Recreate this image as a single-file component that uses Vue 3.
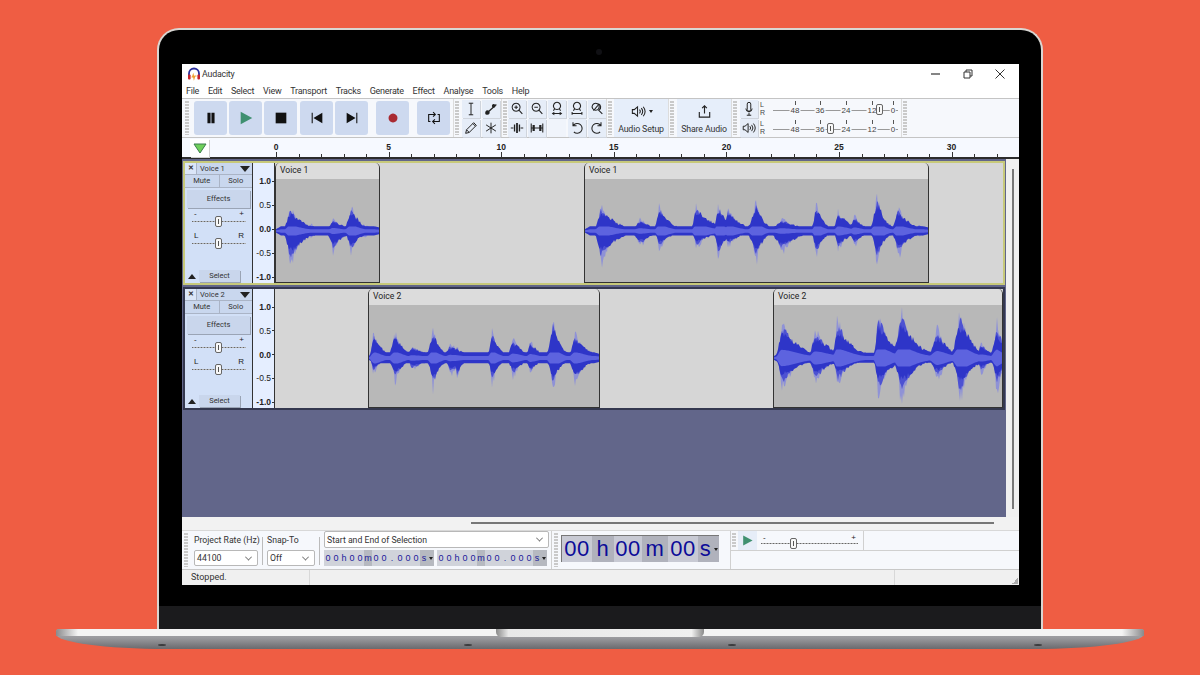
<template>
  <div class="page">
    <div class="lid">
      <div class="camera" />
      <div class="app">
        <div class="titlebar">
          <svg class="logo" viewBox="0 0 14 14">
            <path d="M2 9V6.5a5 5 0 0 1 10 0V9" fill="none" stroke="#2a2f9c" stroke-width="1.8" />
            <rect x="1" y="7.5" width="2.6" height="5" rx="1" fill="#c8222a" />
            <rect x="10.4" y="7.5" width="2.6" height="5" rx="1" fill="#c8222a" />
            <path d="M4.5 10h1l.7-2 .8 3.5.8-2.5h1.7" fill="none" stroke="#f0a030" stroke-width="1.2" />
          </svg>
          <span class="title">Audacity</span>
          <div class="winctl">
            <svg viewBox="0 0 12 12"><path d="M1 6h9" stroke="#333" stroke-width="1.2" /></svg>
            <svg viewBox="0 0 12 12"><path d="M2 4h6v6H2zM4 4V2h6v6H8" fill="none" stroke="#333" stroke-width="1" /></svg>
            <svg viewBox="0 0 12 12"><path d="M1.5 1.5l9 9M10.5 1.5l-9 9" stroke="#333" stroke-width="1" /></svg>
          </div>
        </div>
        <div class="menubar">
          <span v-for="m in menus" :key="m">{{ m }}</span>
        </div>

        <div class="toolbars">
          <div class="grip" />
          <div class="transport">
            <button v-for="b in transport" :key="b.name" class="tbtn" :class="b.cls">
              <svg viewBox="0 0 18 18"><path :d="b.d" :fill="b.fill || 'none'" :stroke="b.stroke || 'none'" :stroke-width="b.sw || 0" /></svg>
            </button>
          </div>
          <div class="sep" /><div class="grip" />
          <div class="tools">
            <button v-for="b in tools" :key="b.name" class="sbtn">
              <svg viewBox="0 0 18 18"><path v-if="b.f" :d="b.f" fill="#222" /><path v-if="b.s" :d="b.s" fill="none" stroke="#222" :stroke-width="b.sw || 1.1" /></svg>
            </button>
          </div>
          <div class="sep" /><div class="grip" />
          <div class="edits">
            <component :is="b.gap ? 'div' : 'button'" v-for="(b, i) in edits" :key="i" :class="b.gap ? 'gapcell' : 'sbtn'">
              <svg v-if="!b.gap" viewBox="0 0 18 18"><path v-if="b.f" :d="b.f" fill="#222" /><path v-if="b.s" :d="b.s" fill="none" stroke="#222" stroke-width="1.2" /></svg>
            </component>
          </div>
          <div class="sep" /><div class="grip" />
          <div class="bigbtn setup">
            <div class="bigicon">
              <svg viewBox="0 0 18 18"><path :d="speaker" fill="none" stroke="#222" stroke-width="1.1" /></svg>
              <i class="caret" />
            </div>
            <span>Audio Setup</span>
          </div>
          <div class="sep" /><div class="grip" />
          <div class="bigbtn share">
            <div class="bigicon">
              <svg viewBox="0 0 18 18"><path d="M9 11V3M6.500 5.500 9 3l2.500 2.500M3.500 9.500v5.500h11V9.500" fill="none" stroke="#222" stroke-width="1.2" /></svg>
            </div>
            <span>Share Audio</span>
          </div>
          <div class="sep" /><div class="grip" />
          <div class="meters">
            <div v-for="m in meters" :key="m.name" class="meter">
              <button class="sbtn">
                <svg viewBox="0 0 18 18"><path :d="m.icon" fill="none" stroke="#222" stroke-width="1.1" /></svg>
              </button>
              <div class="lr"><span>L</span><span>R</span></div>
              <div class="meterscale">
                <i v-for="t in meterTicks" :key="t.label" class="mtick" :style="{ left: t.x + 'px' }" />
                <span v-for="t in meterTicks" :key="t.label" class="mlabel" :style="{ left: t.x + 'px' }">{{ t.label }}</span>
                <b class="thumb" :style="{ left: m.thumb + 'px' }" />
              </div>
            </div>
          </div>
          <div class="sep" /><div class="grip" />
        </div>

        <div class="ruler">
          <div class="playhead">
            <svg viewBox="0 0 14 11"><path d="M1 1h12L7 10z" fill="#6fd05a" stroke="#3c7d4c" stroke-width="1" /></svg>
          </div>
          <svg class="rulerticks" width="837" height="21">
            <line v-for="t in rulerTicks" :key="t.x" :x1="t.x" :x2="t.x" :y1="t.major ? 15 : 17" y2="21" stroke="#333" stroke-width="1" />
          </svg>
          <span v-for="n in rulerLabels" :key="n.t" class="rlabel" :style="{ left: n.x + 'px' }">{{ n.t }}</span>
        </div>

        <div class="workspace">
          <div class="tracks">
            <div v-for="t in tracks" :key="t.name" class="track" :class="{ selected: t.selected }" :style="{ height: t.h + 'px' }">
              <div class="panel">
                <div class="phead">
                  <i class="close">✕</i>
                  <span class="pname">{{ t.name }}</span>
                  <i class="caret big" />
                </div>
                <div class="pmute"><span>Mute</span><span>Solo</span></div>
                <div class="peffects">Effects</div>
                <div class="pslider">
                  <div class="sliderlabels"><span>-</span><span>+</span></div>
                  <div class="sliderline"><b class="thumb" /></div>
                </div>
                <div class="pslider pan">
                  <div class="sliderlabels"><span>L</span><span>R</span></div>
                  <div class="sliderline"><b class="thumb" /></div>
                </div>
                <div class="pfoot">
                  <i class="caret up" />
                  <span class="pselect">Select</span>
                </div>
              </div>
              <div class="vruler">
                <span v-for="v in vscale" :key="v.t" :class="{ bold: v.bold }">{{ v.t }}</span>
              </div>
              <div class="lane">
                <div v-for="c in t.clips" :key="c.gap" class="clip" :style="{ marginLeft: c.gap + 'px', width: c.w + 'px' }">
                  <div class="cliptitle">{{ t.name }}</div>
                  <svg class="wave" :width="c.w" height="106">
                    <path :d="c.outer" fill="#8f92d6" />
                    <path :d="c.peak" fill="#4d52d2" />
                    <path :d="c.mid" fill="#2e35c8" />
                    <path :d="c.rms" fill="#5d63df" />
                  </svg>
                </div>
              </div>
            </div>
          </div>
          <div class="vscroll"><i /></div>
        </div>

        <div class="hscroll"><i /></div>

        <div class="bottombars">
          <div class="grip" />
          <div class="selbar">
            <div class="field rate">
              <label>Project Rate (Hz)</label>
              <div class="combo"><span>44100</span><i class="chev" /></div>
            </div>
            <div class="vbar" />
            <div class="field snap">
              <label>Snap-To</label>
              <div class="combo"><span>Off</span><i class="chev" /></div>
            </div>
            <div class="vbar" />
            <div class="field range">
              <div class="combo wide"><span>Start and End of Selection</span><i class="chev" /></div>
              <div class="times">
                <div v-for="n in 2" :key="n" class="timebox">
                  <span v-for="(ch, i) in smallTime" :key="i" :class="/[ms]/.test(ch) ? 'unit' : 'num'">{{ ch }}</span>
                  <i class="caret" />
                </div>
              </div>
            </div>
          </div>
          <div class="vline sel" />
          <div class="grip tgrip" />
          <div class="bigtime">
            <span v-for="(c, i) in bigTime" :key="i" :class="c.unit ? 'unit' : 'num'" :style="{ width: c.w + 'px' }">{{ c.t }}</span>
            <i class="caret" />
          </div>
          <div class="vline big" />
          <div class="speed">
            <div class="speedrow">
              <div class="grip" />
              <button class="playat">
                <svg viewBox="0 0 18 18"><path d="M3 2l13 7-13 7z" fill="#3f9070" /></svg>
              </button>
              <div class="speedslider">
                <div class="sliderlabels"><span>-</span><span>+</span></div>
                <div class="sliderline"><b class="thumb" /></div>
              </div>
              <div class="vline end" />
            </div>
          </div>
        </div>

        <div class="status">
          <span class="stopped">Stopped.</span>
          <span class="s2" />
          <span class="s3"><i class="resize" /></span>
        </div>
      </div>
      <div class="chin" />
    </div>
    <div class="base">
      <div class="notch" />
      <i class="foot f1" /><i class="foot f2" /><i class="foot f3" /><i class="foot f4" />
    </div>
  </div>
</template>

<script setup>
const menus = ['File', 'Edit', 'Select', 'View', 'Transport', 'Tracks', 'Generate', 'Effect', 'Analyse', 'Tools', 'Help']

const transport = [
  { name: 'pause', d: 'M5 3h3.500v12H5zM9.500 3H13v12H9.500z', fill: '#111' },
  { name: 'play', d: 'M3 2l13 7-13 7z', fill: '#3f9070' },
  { name: 'stop', d: 'M3 3h12v12H3z', fill: '#111' },
  { name: 'prev', cls: 'step', d: 'M3 3h1.200v12H3zM15 3v12L5 9z', fill: '#111' },
  { name: 'next', d: 'M15 3h-1.200v12H15zM3 3v12l10-6z', fill: '#111' },
  { name: 'rec', cls: 'gapl', d: 'M9 4a5 5 0 1 0 .01 0z', fill: '#a92a32' },
  { name: 'loop', cls: 'gapl', d: 'M5 13H3V5h7M8 2.500 10.500 5 8 7.500M13 5h2v8H8M10 15.500 7.500 13l2.500-2.500', stroke: '#111', sw: 1.2 },
]

const tools = [
  { name: 'ibeam', s: 'M6.500 2.500h5M6.500 15.500h5M9 2.500v13' },
  { name: 'env', f: 'M12 3.500a2 2 0 1 0 .01 0zM5 10.500a2.500 2.500 0 1 0 .01 0z', s: 'M3 15 15 4', sw: 1.4 },
  { name: 'draw', s: 'M3 15l1-4 8-8 3 3-8 8zM4 11l3 3M11 4l3 3' },
  { name: 'multi', s: 'M9 3v12M3.500 5.500l11 7M14.500 5.500l-11 7' },
]

const lens = 'M8 2.500a4.500 4.500 0 1 0 .01 0zM11.200 10.300 15 14.500'
const lensSmall = 'M9 1.500a4 4 0 1 0 .01 0zM6.500 8.500 5 11M11.500 8.500 13 11'
const edits = [
  { s: lens + 'M6 7h4M8 5v4' },
  { s: lens + 'M6 7h4' },
  { s: lensSmall + 'M5 14h8', f: 'M3 14l3-2v4zM15 14l-3-2v4z' },
  { s: lensSmall + 'M3.500 12.500v3M14.500 12.500v3M3.500 14h11' },
  { s: 'M7.500 2.500a4 4 0 1 0 .01 0zM10.500 3a4 4 0 0 1 1 7M10.500 10l4.500 4.500M5 11l5-6' },
  { s: 'M2 9h3M13 9h3', f: 'M5.500 5h1.500v8H5.500zM8 3.500h2v11H8zM11 5h1.500v8H11z' },
  { s: 'M2.500 4v10M15.500 4v10M2.500 9h13', f: 'M4 5.500h2.500v7H4zM11.500 5.500H14v7h-2.500z' },
  { gap: true },
  { s: 'M5 6a5.500 5.500 0 1 1 .5 7.500M4.500 2.500V6.500h4' },
  { s: 'M13 6a5.500 5.500 0 1 0-.5 7.500M13.500 2.500V6.500h-4' },
]

const speaker = 'M2.500 7v4h2l3.500 3V4L4.500 7zM10 7a3 3 0 0 1 0 4M12 5.500a5.500 5.500 0 0 1 0 7M14 4a8 8 0 0 1 0 10'
const mic = 'M7 3.500a2 2 0 0 1 4 0v6a2 2 0 0 1-4 0zM5.500 8.500a3.500 3.500 0 0 0 7 0M9 13v3M6.500 16h5'
const meters = [
  { name: 'rec', icon: mic, thumb: 103 },
  { name: 'play', icon: speaker, thumb: 54 },
]
const meterTicks = [
  { label: '48', x: 22 },
  { label: '36', x: 47 },
  { label: '24', x: 73 },
  { label: '12', x: 99 },
  { label: '0', x: 120 },
]

// time axis of the ruler: second zero sits 94px into the window, 22.5px per second
const zeroX = 94
const pxPerSec = 22.52
const rulerTicks = Array.from({ length: 33 }, (_, i) => ({
  x: Math.round(zeroX + i * pxPerSec) + 0.5,
  major: i % 5 === 0,
}))
const rulerLabels = [0, 5, 10, 15, 20, 25, 30].map((t) => ({ t, x: zeroX + t * pxPerSec }))

const vscale = [
  { t: '1.0', bold: true },
  { t: '0.5' },
  { t: '0.0', bold: true },
  { t: '-0.5' },
  { t: '-1.0', bold: true },
]

const smallTime = '00h00m00.000s'.split('')
const bigTime = [
  { t: '00', w: 30 },
  { t: 'h', w: 22, unit: true },
  { t: '00', w: 28 },
  { t: 'm', w: 26, unit: true },
  { t: '00', w: 30 },
  { t: 's', w: 15, unit: true },
]

// little repeatable noise so each clip keeps the same jagged edge between runs
function noise(i, seed) {
  const v = Math.sin(i * 12.9898 + seed * 78.233) * 43758.5453
  return v - Math.floor(v)
}

// syllable shape: soft attack, rounded top, then a long tail
function bump(x, p, stretch) {
  const d = x - p[0]
  const rise = (p[3] || 4) * stretch
  const fall = (p[4] || 12) * stretch
  if (d < 0) return Math.exp(-(d * d) / (rise * rise))
  return 0.62 * Math.exp(-(d * d) / (fall * fall * 1.1)) + 0.38 * Math.exp(-d / (fall * 2.6))
}

function layer(w, cy, top, bottom) {
  let up = `M0 ${cy}`
  let down = ''
  for (let x = 0; x <= w; x++) {
    up += `L${x} ${(cy - top(x)).toFixed(1)}`
    down = `L${x} ${(cy + bottom(x)).toFixed(1)}` + down
  }
  return up + down + 'Z'
}

function makeClip(spec) {
  const { w, cy, peaks, seed, floor, body, rmsMax } = spec
  const taper = (x) => Math.min(1, (x + 2) / 8, (w - x + 14) / 20)
  const env = (x, idx, stretch) => {
    let v = floor
    for (const p of peaks) v = Math.max(v, bump(x, p, stretch) * p[idx])
    return v
  }
  const jag = (x, off, lo) => lo + (1 - lo) * noise(x + off, seed)
  const outerTop = (x) => env(x, 1, 0.7) * jag(x, 0, 0.62) * taper(x)
  const outerBot = (x) => env(x, 2, 0.7) * jag(x, 200, 0.62) * taper(x)
  const peakTop = (x) => env(x, 1, 0.95) * 0.8 * jag(x, 300, 0.72) * taper(x)
  const peakBot = (x) => env(x, 2, 0.95) * 0.7 * jag(x, 500, 0.72) * taper(x)
  const midTop = (x) => Math.max(floor * 2.2, env(x, 1, 1.5) * body * jag(x, 400, 0.74)) * taper(x)
  const midBot = (x) => Math.max(floor * 2, env(x, 2, 1.5) * body * 0.78 * jag(x, 600, 0.74)) * taper(x)
  const rms = (x) => Math.max(floor * 0.8, Math.min(rmsMax, env(x, 1, 1.6) * 0.2)) * taper(x)
  return {
    outer: layer(w, cy, outerTop, outerBot),
    peak: layer(w, cy, peakTop, peakBot),
    mid: layer(w, cy, midTop, midBot),
    rms: layer(w, cy, rms, rms),
  }
}

const tracks = [
  {
    name: 'Voice 1',
    selected: true,
    h: 124,
    clips: [
      {
        gap: 0, w: 105, cy: 52, seed: 1, floor: 2.2, body: 0.7, rmsMax: 4.5,
        peaks: [[15, 26, 40, 3, 9], [36, 8, 8, 3, 6], [58, 15, 25, 3, 7], [76, 28, 27, 3, 6], [88, 8, 8, 3, 9]],
      },
      {
        gap: 204, w: 345, cy: 52, seed: 2, floor: 2.2, body: 0.7, rmsMax: 4.5,
        peaks: [
          [17, 28, 38, 3, 10], [56, 14, 19, 4, 8], [75, 29, 23, 2, 7], [112, 30, 20, 2, 10], [134, 31, 31, 2, 6],
          [144, 26, 20, 2, 8], [172, 34, 38, 4, 5], [198, 14, 26, 6, 11], [232, 31, 33, 2, 5], [254, 23, 23, 2, 8],
          [270, 18, 20, 2, 6], [293, 41, 38, 3, 5], [314, 26, 31, 3, 8], [335, 7, 7, 3, 8],
        ],
      },
    ],
  },
  {
    name: 'Voice 2',
    h: 123,
    clips: [
      {
        gap: 93, w: 232, cy: 53, seed: 3, floor: 2.6, body: 0.7, rmsMax: 5.5,
        peaks: [[5, 30, 19, 2, 6], [27, 30, 28, 3, 6], [44, 14, 15, 3, 11], [65, 33, 37, 3, 5], [82, 16, 20, 3, 11], [89, 14, 30, 1, 3], [124, 31, 32, 2, 5], [145, 22, 23, 3, 7], [162, 20, 20, 2, 6], [185, 44, 37, 3, 5], [207, 28, 30, 3, 8]],
      },
      {
        gap: 173, w: 230, cy: 53, seed: 4, floor: 2.4, body: 0.62, rmsMax: 8.5,
        peaks: [
          [9, 41, 37, 3, 12], [42, 33, 30, 3, 11], [64, 45, 33, 2, 10], [105, 53, 45, 2, 9],
          [128, 55, 50, 4, 10], [164, 35, 28, 4, 8], [187, 55, 50, 4, 8], [208, 18, 18, 3, 7], [224, 42, 40, 3, 8],
        ],
      },
    ],
  },
]

for (const t of tracks) {
  t.clips = t.clips.map((c) => ({ ...c, ...makeClip(c) }))
}
</script>

<style>
html, body { margin: 0; background: #ef5d43; }
</style>

<style scoped>
.page {
  width: 1200px;
  height: 675px;
  overflow: hidden;
  display: flex;
  flex-direction: column;
  align-items: center;
  padding-top: 28px;
  box-sizing: border-box;
  background: #ef5d43;
  font-family: Roboto, "Open Sans", sans-serif;
  color: #222;
}

.lid {
  position: relative;
  width: 886px;
  height: 601px;
  flex-shrink: 0;
  box-sizing: border-box;
  padding: 34px 0 0 23px;
  background: #000;
  border: 2px solid #d9d6d2;
  border-bottom: 0;
  border-radius: 22px 22px 0 0;
  display: flex;
  flex-direction: column;
}

.camera {
  position: absolute;
  top: 19px;
  left: 437px;
  width: 6px;
  height: 6px;
  border-radius: 50%;
  background: #101014;
}

.app {
  width: 837px;
  height: 521px;
  background: #f2f2f2;
  display: flex;
  flex-direction: column;
  flex-shrink: 0;
}

.chin {
  margin: 21px 0 0 -23px;
  width: 882px;
  flex: 1;
  background: #1b1b1d;
}

.titlebar {
  height: 19px;
  padding-bottom: 1px;
  flex-shrink: 0;
  background: #fff;
  display: flex;
  align-items: center;
  padding-left: 5px;
  gap: 1px;
}

.logo { width: 14px; height: 14px; }
.title { font-size: 8.8px; letter-spacing: -0.2px; color: #333; }

.winctl {
  margin-left: auto;
  display: flex;
  gap: 20px;
  padding-right: 13px;
}
.winctl svg { width: 12px; height: 12px; }

.menubar {
  height: 14px;
  flex-shrink: 0;
  background: #fff;
  display: flex;
  align-items: center;
  gap: 8.8px;
  padding-left: 4px;
  font-size: 9px;
  letter-spacing: -0.25px;
  color: #333;
  white-space: nowrap;
}

.toolbars {
  height: 40px;
  flex-shrink: 0;
  box-sizing: border-box;
  background: #f6f8fc;
  border-top: 1px solid #c4c4c4;
  border-bottom: 1px solid #c4c4c4;
  display: flex;
  align-items: stretch;
  padding-left: 2px;
}

.grip {
  width: 4px;
  margin: 2px 0 2px 1px;
  flex-shrink: 0;
  background-image: radial-gradient(circle at 1px 1px, #c8c8c8 0.7px, transparent 1px);
  background-size: 2px 3px;
}

.sep {
  width: 1px;
  background: #dcdcdc;
  flex-shrink: 0;
}

button {
  padding: 0;
  border: 0;
  font: inherit;
  display: flex;
  align-items: center;
  justify-content: center;
}

.transport {
  display: flex;
  align-items: center;
  gap: 2px;
  padding: 0 3px 0 5px;
}

.tbtn {
  width: 33px;
  height: 34px;
  background: #cdd9ef;
  border-radius: 3px;
}
.tbtn svg { width: 16px; height: 16px; }
.tbtn.gapl { margin-left: 6px; }
.tbtn.step { margin-left: 1px; }

.tools, .edits {
  display: grid;
  gap: 1px 2px;
  align-content: center;
}
.tools { grid-template-columns: repeat(2, 18px); grid-auto-rows: 18px; margin: 0 1px 0 3px; }
.edits { grid-template-columns: repeat(5, 18px); grid-auto-rows: 18px; margin-left: 1px; }

.sbtn {
  width: 18px;
  height: 18px;
  background: #e6edf8;
  box-shadow: 1px 1px 0 #cfd4dc;
}
.sbtn svg { width: 16px; height: 16px; }
.gapcell { width: 18px; height: 18px; background: #f0f4fb; }

.bigbtn {
  background: #e6eefa;
  display: flex;
  flex-direction: column;
  align-items: center;
  justify-content: space-between;
  padding: 2px 0 3px;
  font-size: 8.8px;
  letter-spacing: -0.15px;
  color: #333;
  white-space: nowrap;
  flex-shrink: 0;
}
.setup { width: 54px; margin-left: 2px; }
.share { width: 54px; margin-left: 3px; }

.bigicon {
  display: flex;
  align-items: center;
  height: 20px;
  gap: 2px;
}
.bigicon svg { width: 17px; height: 17px; }

.caret {
  display: inline-block;
  width: 0;
  height: 0;
  border-left: 2.5px solid transparent;
  border-right: 2.5px solid transparent;
  border-top: 3px solid #222;
}
.caret.big { border-left-width: 5px; border-right-width: 5px; border-top-width: 6px; margin: 0 2px 0 auto; }
.caret.up { border-top: 0; border-left-width: 4px; border-right-width: 4px; border-bottom: 5px solid #222; margin-left: 3px; }

.meters {
  width: 161px;
  margin-left: 3px;
  display: flex;
  flex-direction: column;
  justify-content: center;
  gap: 1px;
}
.meter {
  display: flex;
  align-items: center;
  height: 18px;
}
.lr {
  width: 13px;
  margin-left: 2px;
  font-size: 7px;
  line-height: 8px;
  display: flex;
  flex-direction: column;
  color: #444;
  font-family: "Liberation Sans", sans-serif;
}

.meterscale {
  position: relative;
  width: 125px;
  height: 18px;
  background: linear-gradient(#999, #999) 0 10px / 100% 1px no-repeat;
}
.mtick {
  position: absolute;
  top: 1px;
  width: 1px;
  height: 4px;
  background: #555;
}
.mlabel {
  position: absolute;
  top: 6px;
  transform: translateX(-50%);
  padding: 0 1px;
  background: #f6f8fc;
  font-size: 8px;
  line-height: 9px;
  color: #444;
  font-family: "Liberation Sans", sans-serif;
}
.thumb {
  position: absolute;
  top: -5px;
  width: 7px;
  height: 11px;
  box-sizing: border-box;
  background: #f8f8f8 linear-gradient(#555, #555) center / 1px 5px no-repeat;
  border: 1px solid #666;
  border-radius: 2px;
}
.meterscale .thumb { top: 4px; }

.ruler {
  position: relative;
  height: 21px;
  flex-shrink: 0;
  box-sizing: border-box;
  background: #f6f9ff;
  border-bottom: 2px solid #2c2c2c;
}
.rulerticks { position: absolute; left: 0; top: -1px; }
.playhead {
  position: absolute;
  left: 8px;
  top: 1px;
  width: 19px;
  height: 18px;
  background: #fff;
  box-shadow: 1px 1px 0 #d0d0d0;
  display: flex;
  align-items: center;
  justify-content: center;
}
.playhead svg { width: 14px; height: 11px; }
.rlabel {
  position: absolute;
  top: 4px;
  transform: translateX(-50%);
  font: bold 8.5px "Liberation Sans", sans-serif;
  color: #222;
}

.workspace {
  flex: 1;
  min-height: 0;
  display: flex;
  background: #62668a;
}
.tracks {
  flex: 1;
  display: flex;
  flex-direction: column;
  gap: 2px;
  padding-top: 2px;
  min-width: 0;
}
.track {
  width: 822px;
  flex-shrink: 0;
  margin-left: 1px;
  box-sizing: border-box;
  display: flex;
  border: 2px solid #34384f;
  background: #d6d6d6;
}
.track.selected { border-color: #c7c97a; }

.panel {
  width: 68px;
  flex-shrink: 0;
  box-sizing: border-box;
  background: #d2e0f7;
  border-right: 1px solid #333;
  display: flex;
  flex-direction: column;
  font: 7.5px Roboto, sans-serif;
  color: #333;
}
.phead {
  height: 12px;
  flex-shrink: 0;
  box-sizing: border-box;
  display: flex;
  align-items: center;
  background: #c9d7ee;
  border-bottom: 1px solid #aab4c6;
}
.close {
  width: 11px;
  flex-shrink: 0;
  font-style: normal;
  text-align: center;
  font-weight: bold;
  font-size: 7px;
  background: #dbe6f8;
  border-right: 1px solid #aab4c6;
  height: 11px;
  line-height: 11px;
}
.pname { padding-left: 3px; }
.pmute {
  height: 13px;
  flex-shrink: 0;
  box-sizing: border-box;
  display: grid;
  grid-template-columns: 1fr 1fr;
  background: #c9d7ee;
  border-bottom: 1px solid #aab4c6;
}
.pmute span { text-align: center; line-height: 12px; }
.pmute span + span { border-left: 1px solid #aab4c6; }
.peffects {
  margin: 2px 2px 0;
  height: 18px;
  flex-shrink: 0;
  line-height: 18px;
  text-align: center;
  background: #c9d6ec;
  box-shadow: 1px 1px 0 #9aa4b5;
}
.pslider {
  margin: 1px 6px 0 7px;
  height: 13px;
  flex-shrink: 0;
}
.pslider.pan { margin-top: 9px; }
.sliderlabels {
  display: flex;
  justify-content: space-between;
  padding: 0 2px;
  font: 8px/9px "Liberation Sans", sans-serif;
  color: #222;
}
.sliderline {
  position: relative;
  margin-top: 3px;
  height: 1px;
  background: repeating-linear-gradient(90deg, #666 0 1px, #b0b0b0 1px 3px);
}
.sliderline .thumb { left: 23px; }
.pfoot {
  margin-top: auto;
  padding-bottom: 1px;
  display: flex;
  align-items: center;
  gap: 3px;
}
.pselect {
  width: 41px;
  height: 12px;
  line-height: 12px;
  text-align: center;
  background: #c9d6ec;
  box-shadow: 1px 1px 0 #9aa4b5;
}

.vruler {
  width: 22px;
  flex-shrink: 0;
  box-sizing: border-box;
  background: #e5eeff;
  border-right: 1px solid #333;
  padding: 13px 0 1px;
  display: flex;
  flex-direction: column;
  justify-content: space-between;
  align-items: flex-end;
  font: 8.5px/10px "Liberation Sans", sans-serif;
  color: #222;
}
.vruler span {
  display: flex;
  align-items: center;
  gap: 1px;
}
.vruler span::after {
  content: "";
  width: 2px;
  height: 1px;
  background: #333;
}
.vruler .bold { font-weight: bold; }

.lane {
  flex: 1;
  min-width: 0;
  display: flex;
  overflow: hidden;
}
.clip {
  flex-shrink: 0;
  height: 100%;
  box-sizing: border-box;
  background: #b8b8b8;
  border: solid #333;
  border-width: 0 1px 1px;
  border-radius: 5px 5px 0 0;
  overflow: hidden;
}
.cliptitle {
  height: 16px;
  line-height: 15px;
  padding-left: 4px;
  background: #dcdcdc;
  font-size: 8.6px;
  color: #222;
}
.wave { display: block; margin-left: -1px; }

.vscroll {
  width: 13px;
  flex-shrink: 0;
  background: #f0f0f0;
  display: flex;
  justify-content: center;
  padding-top: 10px;
  box-sizing: border-box;
}
.vscroll i {
  width: 2px;
  height: 340px;
  background: #777;
}

.hscroll {
  height: 13px;
  flex-shrink: 0;
  box-sizing: border-box;
  padding: 5px 25px 0 289px;
  background: #f2f2f2;
}
.hscroll i {
  display: block;
  height: 2px;
  background: #777;
}

.bottombars {
  height: 40px;
  flex-shrink: 0;
  box-sizing: border-box;
  background: #f6f8fc;
  border-top: 1px solid #d8d8d8;
  border-bottom: 1px solid #c8c8c8;
  display: flex;
  align-items: stretch;
  padding-left: 1px;
}

.selbar {
  display: flex;
  padding-left: 6px;
  box-sizing: border-box;
  font-size: 8.7px;
  color: #333;
}
.field {
  display: flex;
  flex-direction: column;
  justify-content: space-between;
  padding: 0 0 3px;
  flex-shrink: 0;
}
.field label { line-height: 17px; white-space: nowrap; padding-top: 1px; }
.rate { width: 64px; }
.snap { width: 48px; }
.range { width: 225px; }
.combo {
  height: 16px;
  box-sizing: border-box;
  background: #fff;
  border: 1px solid #b8b8b8;
  border-radius: 2px;
  display: flex;
  align-items: center;
  padding: 0 6px 0 2px;
}
.combo.wide { height: 17px; }
.chev {
  margin-left: auto;
  width: 4px;
  height: 4px;
  border: solid #777;
  border-width: 0 1px 1px 0;
  transform: rotate(45deg) translate(-1px, -1px);
}
.vbar {
  width: 1px;
  height: 28px;
  margin: 6px 4px 0;
  background: #bbb;
  flex-shrink: 0;
}
.times { display: flex; gap: 3px; }
.timebox {
  width: 110px;
  height: 16px;
  box-sizing: border-box;
  display: flex;
  align-items: center;
  background: #b6b9c0;
  font: 9px/16px "Liberation Sans", sans-serif;
  color: #1a1a9a;
}
.timebox span { flex: 1; height: 100%; text-align: center; }
.timebox .num { background: #d0d3da; }
.timebox .unit { background: #b6b9c0; }
.timebox .caret { margin: 0 1px; flex-shrink: 0; }

.vline {
  width: 1px;
  background: #d0d0d0;
  flex-shrink: 0;
}
.vline.sel { margin-left: 2px; }
.vline.big { margin-left: 11px; }
.vline.end { margin-left: 5px; }
.tgrip { margin-left: 2px; }

.bigtime {
  align-self: flex-start;
  margin: 4px 0 0 3px;
  width: 158px;
  height: 27px;
  flex-shrink: 0;
  box-sizing: border-box;
  display: flex;
  align-items: center;
  background: #b0b2bc;
  border: 1px solid #777;
  border-width: 1px 0 0 1px;
  font: 22px/26px "Liberation Sans", sans-serif;
  letter-spacing: 0.6px;
  color: #0c0c98;
}
.bigtime span { height: 100%; text-align: center; flex-shrink: 0; }
.bigtime .num { background: #c8cad4; }
.bigtime .unit { background: #b0b2bc; }
.bigtime .caret { margin-left: 1px; }

.speed {
  flex: 1;
  display: flex;
  flex-direction: column;
}
.speedrow {
  height: 19px;
  display: flex;
  align-items: stretch;
  border-bottom: 1px solid #d0d0d0;
}
.playat {
  width: 19px;
  margin-left: 2px;
  background: #e6edf8;
  flex-shrink: 0;
}
.playat svg { width: 13px; height: 13px; }
.speedslider {
  width: 97px;
  margin: 2px 0 0 4px;
  flex-shrink: 0;
}
.speedslider .sliderline { margin-top: 1px; }
.speedslider .thumb { left: 29px; }

.status {
  height: 15px;
  flex-shrink: 0;
  display: flex;
  font-size: 9px;
  color: #333;
  background: #f0f0f0;
  line-height: 15px;
}
.stopped { width: 127px; padding-left: 9px; box-sizing: border-box; }
.s2 { width: 584px; border-left: 1px solid #d8d8d8; }
.s3 { flex: 1; border-left: 1px solid #d8d8d8; position: relative; }
.resize {
  position: absolute;
  right: 1px;
  bottom: 1px;
  width: 6px;
  height: 6px;
  background: linear-gradient(135deg, transparent 50%, #aaa 50%);
}

.base {
  position: relative;
  width: 1088px;
  height: 20px;
  flex-shrink: 0;
  border-radius: 3px 3px 110px 110px / 3px 3px 15px 15px;
  background: linear-gradient(#a8a8ac, #9a9a9e 9px, #6a6a6e 20px);
}
.base::before {
  content: "";
  position: absolute;
  inset: 0 0 auto;
  height: 7px;
  border-radius: 3px 3px 0 0;
  background: linear-gradient(90deg, #8a8a8c, #f4f4f4 22px, #f4f4f4 calc(100% - 22px), #8a8a8c);
}
.notch {
  position: relative;
  width: 208px;
  height: 8px;
  margin: 0 auto;
  border-radius: 0 0 5px 5px;
  background: linear-gradient(90deg, #8a8a8a, #e8e8e8 6%, #f0f0f0 94%, #8a8a8a);
}
.foot {
  position: absolute;
  top: 15px;
  width: 8px;
  height: 2px;
  border-radius: 50%;
  background: #3c3c3e;
}
.f1 { left: 102px; }
.f2 { left: 408px; }
.f3 { right: 408px; }
.f4 { right: 102px; }
</style>
